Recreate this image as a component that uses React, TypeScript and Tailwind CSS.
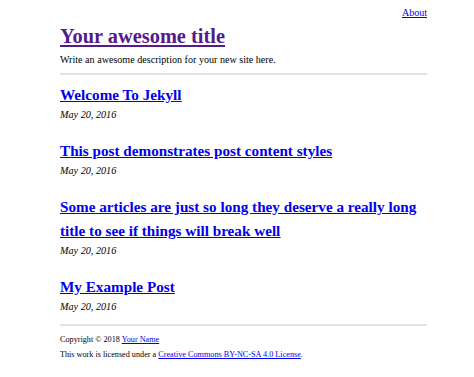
import React from "react";

const posts = [
  { title: ["Welcome To Jekyll"], date: "May 20, 2016" },
  { title: ["This post demonstrates post content styles"], date: "May 20, 2016" },
  {
    title: ["Some articles are just so long they deserve a really long", "title to see if things will break well"],
    date: "May 20, 2016",
  },
  { title: ["My Example Post"], date: "May 20, 2016" },
];

export default function App() {
  return (
    <div className="min-h-[377px] bg-white text-black font-['Liberation_Serif',serif]">
      <div className="ml-[60px] w-[367px]">
        <nav className="flex h-[24px] items-center justify-end text-[10px]">
          <a href="#" className="text-[#0000ee] underline">About</a>
        </nav>
        <h1 className="text-[20.4px] font-bold leading-[24px]">
          <a href="#" className="text-[#551a8b] underline">Your awesome title</a>
        </h1>
        <p className="mt-[4px] text-[10.1px] leading-[16px]">Write an awesome description for your new site here.</p>
        <hr className="mt-[5px] border-t-2 border-[#e3e3e3]" />
        <div className="mt-[8px] flex flex-col gap-[16px]">
          {posts.map((p, i) => (
            <div key={i}>
              <h2 className="text-[15.2px] font-bold leading-[24px]">
                <a href="#" className="text-[#0000ee] underline">
                  {p.title.map((t, j) => (
                    <span key={j} className="block w-fit underline">{t}</span>
                  ))}
                </a>
              </h2>
              <p className="text-[10.2px] italic leading-[16px]">{p.date}</p>
            </div>
          ))}
        </div>
        <hr className="mt-[9px] border-t-2 border-[#e3e3e3]" />
        <footer className="mt-[6px] text-[8.2px] leading-[15px]">
          <p>
            Copyright © 2018 <a href="#" className="text-[#0000ee] underline">Your Name</a>
          </p>
          <p>
            This work is licensed under a{" "}
            <a href="#" className="text-[#0000ee] underline">Creative Commons BY-NC-SA 4.0 License</a>.
          </p>
        </footer>
      </div>
    </div>
  );
}
